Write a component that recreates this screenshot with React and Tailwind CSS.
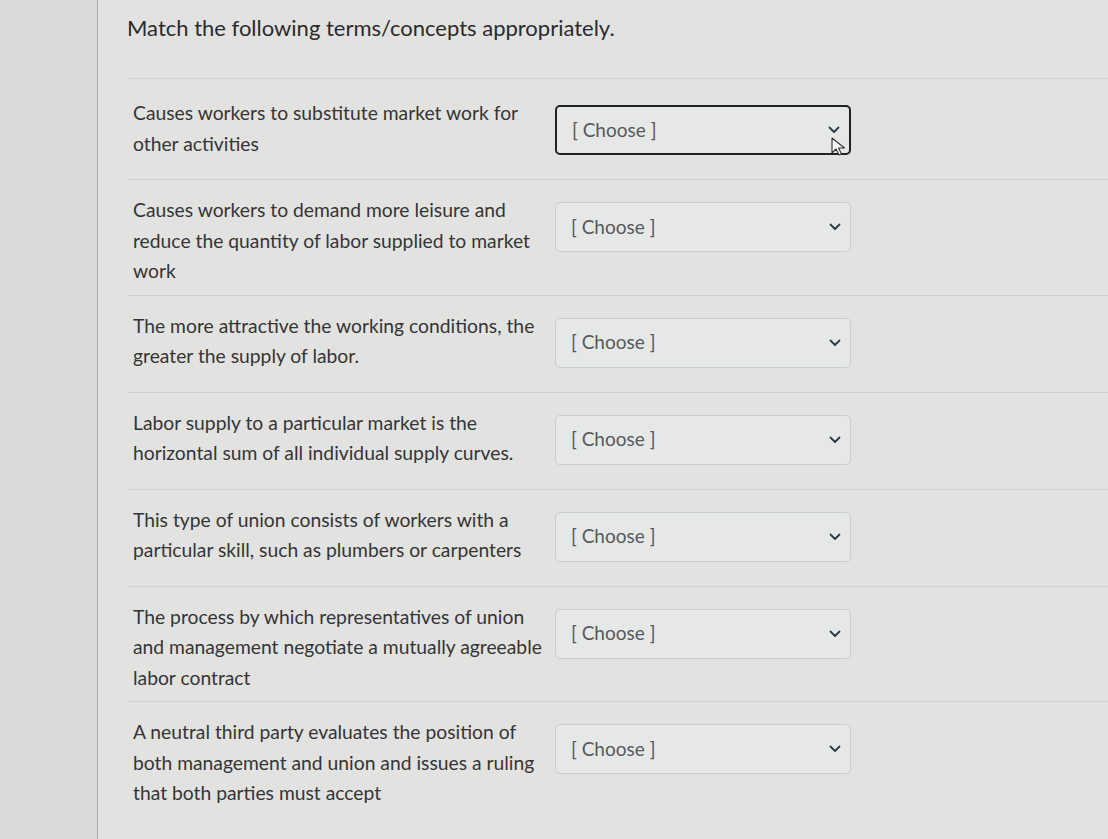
import React from 'react';

const rows = [
  'Causes workers to substitute market work for other activities',
  'Causes workers to demand more leisure and reduce the quantity of labor supplied to market work',
  'The more attractive the working conditions, the greater the supply of labor.',
  'Labor supply to a particular market is the horizontal sum of all individual supply curves.',
  'This type of union consists of workers with a particular skill, such as plumbers or carpenters',
  'The process by which representatives of union and management negotiate a mutually agreeable labor contract',
  'A neutral third party evaluates the position of both management and union and issues a ruling that both parties must accept',
];

const Chevron = () => (
  <svg width="12" height="8" viewBox="0 0 12 8" fill="none">
    <path d="M1.5 1.5 6 6l4.5-4.5" stroke="#2d3b45" strokeWidth="1.8" strokeLinecap="round" strokeLinejoin="round" />
  </svg>
);

const Select = ({ focused }) => (
  <div
    className={
      'relative flex items-center justify-between w-[296px] h-[50px] mt-[7px] mb-[16px] pl-[15px] pr-[9px] rounded-[5px] bg-[#e6e7e7] ' +
      (focused ? 'border-2 border-[#1f2326]' : 'border border-[#c9cdd0]')
    }
  >
    <span className="text-[19px] text-[#55595c]">[ Choose ]</span>
    <Chevron />
    {focused && (
      <svg className="absolute left-[274px] top-[30px]" width="16" height="20" viewBox="0 0 16 20">
        <path d="M1 1v15l4-4 3 6 2.5-1-3-6h6z" fill="#f4f4f4" stroke="#333" strokeWidth="1.1" strokeLinejoin="round" />
      </svg>
    )}
  </div>
);

export default function App() {
  return (
    <div className="flex min-h-[839px] w-[1108px] bg-[#e2e2e1] font-['Lato',sans-serif] text-[#353535] overflow-hidden">
      <div className="w-[98px] shrink-0 bg-[#d9d9d8] border-r border-[#a9a9a9]" />
      <div className="flex-1 pl-[29px]">
        <h1 className="pt-[12px] h-[79px] text-[22px] leading-[32px] text-[#2b2b2b] border-b border-[#cfcfcf]">
          Match the following terms/concepts appropriately.
        </h1>
        {rows.map((text, i) => (
          <div
            key={i}
            className={
              'flex items-start pl-[6px] pb-[8px] border-b border-[#d0d0d0] last:border-b-0 ' +
              (i === 0 ? 'pt-[19px]' : 'pt-[15px]')
            }
          >
            <p className="w-[416px] shrink-0 text-[19.3px] leading-[30.5px]">{text}</p>
            <div className="ml-[6px]">
              <Select focused={i === 0} />
            </div>
          </div>
        ))}
      </div>
    </div>
  );
}
